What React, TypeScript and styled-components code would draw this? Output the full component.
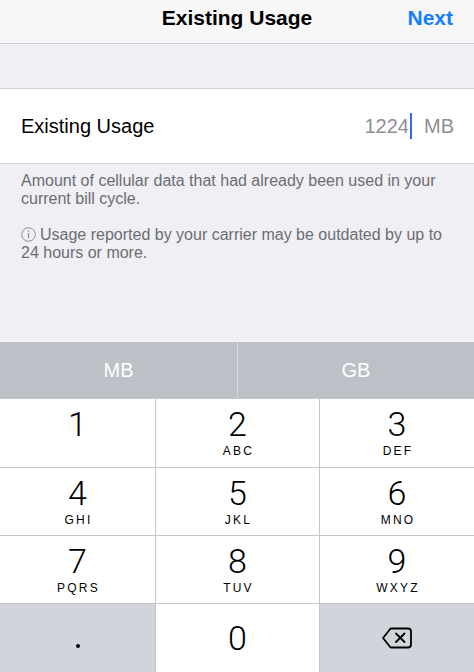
import React from 'react';
import styled, { createGlobalStyle } from 'styled-components';

const GlobalStyle = createGlobalStyle`
  html, body {
    margin: 0;
    padding: 0;
    background: #efeff4;
    font-family: "Liberation Sans", Arial, sans-serif;
    -webkit-font-smoothing: antialiased;
  }
  #root {
    height: 672px;
  }
`;

const keys = [
  { digit: '1', letters: '' },
  { digit: '2', letters: 'ABC' },
  { digit: '3', letters: 'DEF' },
  { digit: '4', letters: 'GHI' },
  { digit: '5', letters: 'JKL' },
  { digit: '6', letters: 'MNO' },
  { digit: '7', letters: 'PQRS' },
  { digit: '8', letters: 'TUV' },
  { digit: '9', letters: 'WXYZ' },
];

const InfoIcon = () => (
  <svg width="15" height="15" viewBox="0 0 15 15" style={{ verticalAlign: '-2px', marginRight: 4 }}>
    <circle cx="7.5" cy="7.5" r="6.8" fill="none" stroke="#8e8e93" strokeWidth="1" />
    <rect x="6.9" y="6" width="1.2" height="5.2" fill="#8e8e93" />
    <circle cx="7.5" cy="4.1" r="0.8" fill="#8e8e93" />
  </svg>
);

const DeleteIcon = () => (
  <svg width="32" height="24" viewBox="0 0 32 24">
    <path
      d="M10.5 2.5 H27 a3 3 0 0 1 3 3 V18.5 a3 3 0 0 1 -3 3 H10.5 a2 2 0 0 1 -1.5 -0.7 L2 12 L9 3.2 a2 2 0 0 1 1.5 -0.7 Z"
      fill="none"
      stroke="#000"
      strokeWidth="1.8"
      strokeLinejoin="round"
    />
    <path d="M15 7.5 L23.5 16 M23.5 7.5 L15 16" stroke="#000" strokeWidth="1.8" strokeLinecap="round" />
  </svg>
);

const App: React.FC = () => {
  return (
    <Page>
      <GlobalStyle />
      <NavBar>
        <NavTitle>Existing Usage</NavTitle>
        <NavAction>Next</NavAction>
      </NavBar>
      <Spacer />
      <Row>
        <RowLabel>Existing Usage</RowLabel>
        <ValueBox>
          <Value>1224</Value>
          <Caret />
          <Unit>MB</Unit>
        </ValueBox>
      </Row>
      <Footer>
        <FooterText>Amount of cellular data that had already been used in your current bill cycle.</FooterText>
        <FooterText>
          <InfoIcon />
          Usage reported by your carrier may be outdated by up to 24 hours or more.
        </FooterText>
      </Footer>
      <Keyboard>
        <AccessoryBar>
          <AccessoryButton>MB</AccessoryButton>
          <AccessoryButton>GB</AccessoryButton>
        </AccessoryBar>
        <KeyGrid>
          {keys.map((k) => (
            <Key key={k.digit}>
              <Digit>{k.digit}</Digit>
              <Letters>{k.letters}</Letters>
            </Key>
          ))}
          <Key dark center>
            <Dot />
          </Key>
          <Key center>
            <Digit>0</Digit>
          </Key>
          <Key dark center>
            <DeleteIcon />
          </Key>
        </KeyGrid>
      </Keyboard>
    </Page>
  );
};

export default App;

const Page = styled.div`
  height: 672px;
  display: flex;
  flex-direction: column;
  background: #efeff4;
  overflow: hidden;
`;

const NavBar = styled.div`
  position: relative;
  height: 44px;
  flex-shrink: 0;
  display: flex;
  align-items: center;
  justify-content: center;
  padding-bottom: 8px;
  box-sizing: border-box;
  background: #f7f7f8;
  border-bottom: 1px solid #cfcfd3;
`;

const NavTitle = styled.div`
  font-size: 21px;
  font-weight: 700;
  color: #000;
`;

const NavAction = styled.div`
  position: absolute;
  right: 21px;
  top: 6px;
  font-size: 21px;
  font-weight: 700;
  color: #147efb;
`;

const Spacer = styled.div`
  height: 44px;
  flex-shrink: 0;
  border-bottom: 1px solid #d4d4d8;
`;

const Row = styled.div`
  height: 74px;
  flex-shrink: 0;
  display: flex;
  align-items: center;
  justify-content: space-between;
  padding: 0 20px 0 21px;
  background: #fff;
  border-bottom: 1px solid #d4d4d8;
`;

const RowLabel = styled.div`
  font-size: 20px;
  color: #000;
`;

const ValueBox = styled.div`
  display: flex;
  align-items: center;
  font-size: 20px;
  color: #8e8e93;
`;

const Value = styled.span``;

const Caret = styled.span`
  width: 2px;
  height: 26px;
  margin: 0 12px 0 1px;
  background: #2f6bf0;
`;

const Unit = styled.span``;

const Footer = styled.div`
  flex: 1;
  padding: 8px 21px 0;
  display: flex;
  flex-direction: column;
  gap: 18px;
`;

const FooterText = styled.div`
  font-size: 16px;
  line-height: 18px;
  color: #6d6d72;
`;

const Keyboard = styled.div`
  flex-shrink: 0;
  display: flex;
  flex-direction: column;
  gap: 1px;
  background: #c6c7ca;
`;

const AccessoryBar = styled.div`
  height: 56px;
  display: grid;
  grid-template-columns: 237px 1fr;
  gap: 1px;
  background: #d6d9dd;
`;

const AccessoryButton = styled.div`
  display: flex;
  align-items: center;
  justify-content: center;
  background: #bcc1c8;
  color: #fff;
  font-size: 20px;
`;

const KeyGrid = styled.div`
  display: grid;
  grid-template-columns: 155px 163px 1fr;
  grid-template-rows: 68px 67px 67px 68px;
  gap: 1px;
`;

const Key = styled.div<{ dark?: boolean; center?: boolean }>`
  display: flex;
  flex-direction: column;
  align-items: center;
  justify-content: ${({ center }) => (center ? 'center' : 'flex-start')};
  padding-top: ${({ center }) => (center ? '0' : '6px')};
  box-sizing: border-box;
  background: ${({ dark }) => (dark ? '#d1d4da' : '#fff')};
  color: #000;
`;

const Digit = styled.div`
  font-family: Roboto, "Liberation Sans", sans-serif;
  font-size: 34px;
  line-height: 38px;
  font-weight: 300;
`;

const Letters = styled.div`
  font-size: 12px;
  line-height: 14px;
  letter-spacing: 2.2px;
  margin: 1px 0 0 2px;
`;

const Dot = styled.div`
  width: 4px;
  height: 4px;
  margin-top: 16px;
  border-radius: 50%;
  background: #000;
`;
